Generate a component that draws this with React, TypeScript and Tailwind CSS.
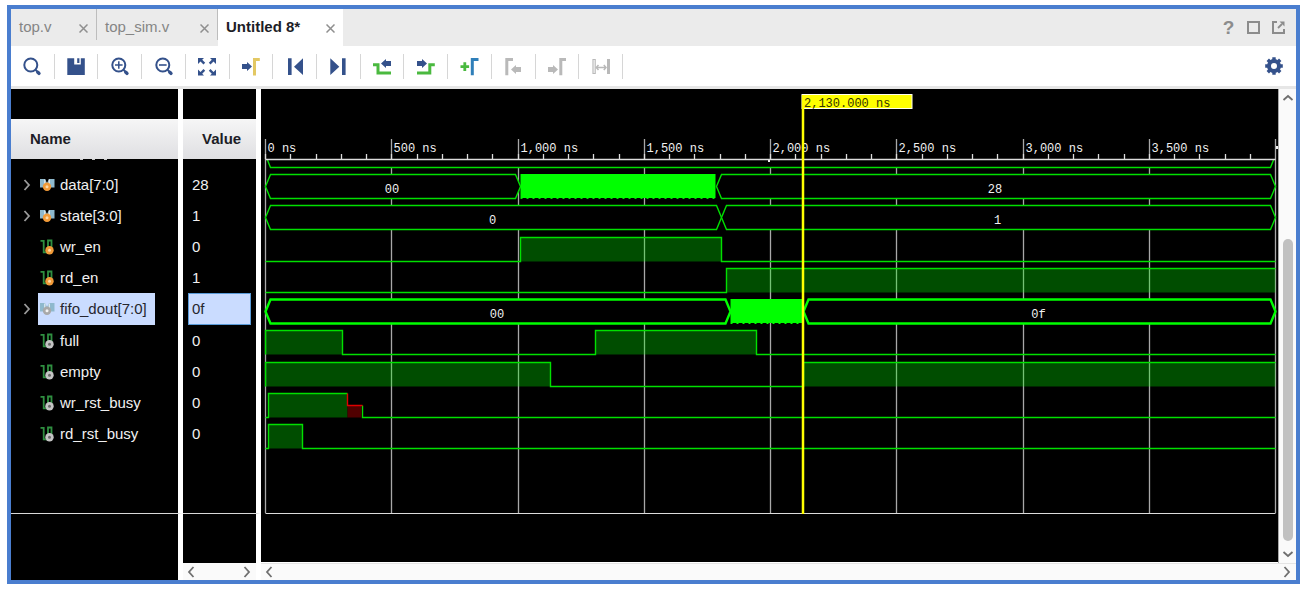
import React from 'react';

type Kind = 'bus' | 'bit';

// [start ns, end ns, text]; a null text is a burst of fast changes
type Segment = [number, number, string | null];

interface Signal {
  name: string;
  value: string;
  kind: Kind;
  internal?: boolean;
  selected?: boolean;
  segments?: Segment[];
  highs?: [number, number][];
  unknown?: [number, number];
}

const END = 4000;

const signals: Signal[] = [
  { name: 'data[7:0]', value: '28', kind: 'bus', internal: true, segments: [[0, 1008, '00'], [1008, 1788, null], [1788, END, '28']] },
  { name: 'state[3:0]', value: '1', kind: 'bus', internal: true, segments: [[0, 1806, '0'], [1806, END, '1']] },
  { name: 'wr_en', value: '0', kind: 'bit', internal: true, highs: [[1008, 1806]] },
  { name: 'rd_en', value: '1', kind: 'bit', internal: true, highs: [[1826, END]] },
  { name: 'fifo_dout[7:0]', value: '0f', kind: 'bus', selected: true, segments: [[0, 1841, '00'], [1841, 2130, null], [2130, END, '0f']] },
  { name: 'full', value: '0', kind: 'bit', highs: [[0, 305], [1308, 1945]] },
  { name: 'empty', value: '0', kind: 'bit', highs: [[0, 1130], [2130, END]] },
  { name: 'wr_rst_busy', value: '0', kind: 'bit', highs: [[10, 326]], unknown: [326, 386] },
  { name: 'rd_rst_busy', value: '0', kind: 'bit', highs: [[10, 148]] },
];

const NAVY = '#34518b';
const GREEN = '#4ab93f';
const GREY = '#b9b9b9';

const arrowRight = (x: number, y: number) => `M${x} ${y + 2}h5v-2l5 4.5-5 4.5v-2h-5z`;
const arrowLeft = (x: number, y: number) => `M${x + 10} ${y + 2}h-5v-2l-5 4.5 5 4.5v-2h5z`;

const Lens = ({ children }: { children?: React.ReactNode }) => (
  <g fill="none" stroke={NAVY}>
    <circle cx="8.8" cy="9" r="6.5" strokeWidth="2" />
    <path d="M13.5 13.8l2.6 2.6" strokeWidth="2" />
    <path d="M15.8 16.2l1.2 1.2" strokeWidth="3.4" strokeLinecap="round" />
    {children}
  </g>
);

const tools: { label: string; disabled?: boolean; icon: React.ReactNode }[] = [
  { label: 'Search', icon: <Lens /> },
  {
    label: 'Save',
    icon: <path fill={NAVY} d="M1.3 2.3h6.9v6.2h6.6V2.3h4V19H1.3zM11.2 2.3h2.2v4.6h-2.2z" />,
  },
  { label: 'Zoom in', icon: <Lens><path d="M5 9h7.6M8.8 5.2v7.6" strokeWidth="1.5" /></Lens> },
  { label: 'Zoom out', icon: <Lens><path d="M5 9h7.6" strokeWidth="1.6" /></Lens> },
  {
    label: 'Zoom fit',
    icon: (
      <path
        fill={NAVY}
        d="M1 2h6L5.2 3.8l3 3-1.7 1.7-3-3L1 8zM19 2h-6l1.8 1.8-3 3 1.7 1.7 3-3L19 8zM1 19.5h6l-1.8-1.8 3-3L6.500 13l-3 3L1 13.5zM19 19.5h-6l1.8-1.8-3-3 1.7-1.7 3 3 2.5-2.5z"
      />
    ),
  },
  {
    label: 'Go to time',
    icon: (
      <>
        <path fill={NAVY} d={arrowRight(1, 6)} />
        <path fill="none" stroke="#e3c863" strokeWidth="3" d="M13.5 19.5v-16h5.3" />
      </>
    ),
  },
  { label: 'Go to start', icon: <path fill={NAVY} d="M3 2.3h3.6V19H3zM18 2.3V19l-9-8.3z" /> },
  { label: 'Go to end', icon: <path fill={NAVY} d="M2.3 2.3V19l9-8.3zM14 2.3h3.6V19H14z" /> },
  {
    label: 'Previous transition',
    icon: (
      <>
        <path fill="none" stroke={GREEN} strokeWidth="3" d="M1 8.8h5V17h13" />
        <path fill={NAVY} d={arrowLeft(9, 3)} />
      </>
    ),
  },
  {
    label: 'Next transition',
    icon: (
      <>
        <path fill="none" stroke={GREEN} strokeWidth="3" d="M1 17h12.8V8.8h5" />
        <path fill={NAVY} d={arrowRight(1, 3)} />
      </>
    ),
  },
  {
    label: 'Add marker',
    icon: (
      <>
        <path fill="none" stroke={GREEN} strokeWidth="2.8" d="M.5 10.700h8.600M4.800 6.300v8.800" />
        <path fill="none" stroke="#2f7fb9" strokeWidth="3" d="M12.300 19.200V3.500h6.200" />
      </>
    ),
  },
  {
    label: 'Previous marker',
    disabled: true,
    icon: (
      <>
        <path fill="none" stroke={GREY} strokeWidth="3" d="M3.800 19.200V3.500H10" />
        <path fill={GREY} d={arrowLeft(8, 9)} />
      </>
    ),
  },
  {
    label: 'Next marker',
    disabled: true,
    icon: (
      <>
        <path fill={GREY} d={arrowRight(1, 9)} />
        <path fill="none" stroke={GREY} strokeWidth="3" d="M13.800 19.200V3.500H19" />
      </>
    ),
  },
  {
    label: 'Swap cursors',
    disabled: true,
    icon: (
      <>
        <path fill="none" stroke={GREY} strokeWidth="1.2" d="M2 3.500h2.200v14H2z" />
        <path fill="none" stroke={GREY} strokeWidth="1.5" d="M5 11.500h10M7.500 9L5.300 11.500l2.200 2.500M12.800 9l2.200 2.500-2.200 2.500" />
        <path fill={GREY} d="M16 3h3v15h-3z" />
      </>
    ),
  },
];

const Chevron = ({ dir }: { dir: 'left' | 'right' | 'up' | 'down' }) => {
  const d = {
    left: 'M7.5 1L3 6l4.5 5',
    right: 'M3.5 1L8 6l-4.5 5',
    up: 'M1.5 8L6 4l4.5 4',
    down: 'M1.5 4L6 8l4.5-4',
  }[dir];
  return (
    <svg viewBox="0 0 12 12" className="block h-3 w-3" fill="none" stroke="currentColor" strokeWidth="1.8">
      <path d={d} />
    </svg>
  );
};

const SignalIcon = ({ kind, internal }: { kind: Kind; internal?: boolean }) => (
  <svg viewBox="0 0 16 16" className="h-4 w-4 shrink-0">
    {kind === 'bus' ? (
      <>
        <path fill="#8fb9cd" d="M1 2h5l2 4 2-4h5.500v8.500H1z" />
        <path fill="none" stroke="#dfeaf0" strokeWidth="1.300" d="M5.800 2.500v4.500M10.300 2.500v4.500" />
        <circle cx="8" cy="9.800" r="4.200" fill={internal ? '#f19a38' : '#a9a9a9'} />
        <circle cx="8" cy="9.800" r="1.500" fill={internal ? '#fbd9a8' : '#f4f4f4'} />
      </>
    ) : (
      <>
        <path fill="none" stroke="#2f8f40" strokeWidth="1.800" d="M1.500 1.800h3.200v11.500H9V1.500h3.500v8" />
        <circle cx="10.500" cy="11.300" r="4.200" fill={internal ? '#f19a38' : '#c4c4c4'} />
        <circle cx="10.500" cy="11.300" r="1.500" fill={internal ? '#fbd9a8' : '#6b6b6b'} />
      </>
    )}
  </svg>
);

const Tab = ({ title, width, active }: { title: string; width: string; active?: boolean }) => (
  <div className={`flex h-[37px] ${width} ${active ? 'bg-white font-bold text-[#1d1d26]' : 'text-[#858585]'}`}>
    <div className="flex flex-1 items-center justify-between px-2 pb-[2px]">
      <button type="button" className="whitespace-nowrap">{title}</button>
      <button type="button" aria-label={`Close ${title}`} className="pt-1 text-[#8f8f8f]">
        <svg viewBox="0 0 9 9" className="block h-[9px] w-[9px]" stroke="currentColor" strokeWidth="1.500">
          <path d="M.5.5l8 8M8.500.5l-8 8" />
        </svg>
      </button>
    </div>
    {!active && <div className="h-[31px] w-px bg-[#bdbdbd]" />}
  </div>
);

const Toolbar = () => (
  <div className="flex h-10 items-center justify-between bg-white">
    <div className="flex w-[612px]">
      {tools.map((tool) => (
        <button
          key={tool.label}
          type="button"
          aria-label={tool.label}
          disabled={tool.disabled}
          className="flex h-[25px] flex-1 items-center justify-center border-r border-[#d6d6d6]"
        >
          <svg viewBox="0 0 20 20" className="h-5 w-5 overflow-visible">{tool.icon}</svg>
        </button>
      ))}
    </div>
    <button type="button" aria-label="Settings" className="mr-3">
      <svg viewBox="-10 -10 20 20" className="block h-5 w-5" fill="none" stroke={NAVY}>
        <circle r="5" strokeWidth="4" />
        {[0, 45, 90, 135].map((a) => (
          <path key={a} d="M0-8.800V-6M0 8.800V6" strokeWidth="3.400" transform={`rotate(${a})`} />
        ))}
      </svg>
    </button>
  </div>
);

const SignalTable = () => {
  const cell = 'border-r-[5px] border-white p-0';
  return (
    <table className="w-[250px] shrink-0 table-fixed border-separate border-spacing-0 bg-black text-[15px] leading-5 text-[#f0f0f0]">
      <colgroup>
        <col className="w-[172px]" />
        <col className="w-[78px]" />
      </colgroup>
      <thead>
        <tr className="h-[30px]">
          <td className={cell} />
          <td className={cell} />
        </tr>
        <tr className="h-10 text-left text-[#1d1d26]">
          <th scope="col" className={`${cell} bg-linear-to-b from-[#f6f6f6] to-[#dfdfe2] bg-clip-padding pl-[19px]`}>Name</th>
          <th scope="col" className={`${cell} bg-linear-to-b from-[#f6f6f6] to-[#dfdfe2] bg-clip-padding pl-[19px]`}>Value</th>
        </tr>
      </thead>
      <tbody>
        <tr className="h-[10px]">
          <td className={`${cell} align-top`}>
            {/* tail of the row scrolled under the header */}
            <div className="flex h-px gap-[9px] pl-[69px]">
              <span className="w-[3px] bg-[#c8c8c8]" />
              <span className="w-[3px] bg-[#c8c8c8]" />
              <span className="w-[3px] bg-[#c8c8c8]" />
            </div>
          </td>
          <td className={cell} />
        </tr>
        {signals.map((s) => (
          <tr key={s.name} className={s.selected ? 'h-8' : 'h-[31px]'}>
            <td className={cell}>
              <div className="flex items-center pl-[10px]">
                <div className="w-[17px] text-[#9a9a9a]">
                  {s.kind === 'bus' && (
                    <button type="button" aria-label={`Expand ${s.name}`} className="block">
                      <Chevron dir="right" />
                    </button>
                  )}
                </div>
                <div className={`flex items-center gap-[5px] pr-2 pl-px ${s.selected ? 'h-8 bg-[#cadcff] text-[#26262e]' : ''}`}>
                  <SignalIcon kind={s.kind} internal={s.internal} />
                  <span>{s.name}</span>
                </div>
              </div>
            </td>
            <td className={cell}>
              <div
                className={`ml-[5px] flex w-[63px] items-center border pl-[3px] ${
                  s.selected ? 'h-8 border-[#5a9bd8] bg-[#cadcff] text-[#26262e]' : 'border-transparent'
                }`}
              >
                {s.value}
              </div>
            </td>
          </tr>
        ))}
        <tr className="h-[65px]">
          <td className={`${cell} border-b border-b-[#d8d8d8]`} />
          <td className={`${cell} border-b border-b-[#d8d8d8]`} />
        </tr>
        <tr className="h-[49px]">
          <td className={cell} />
          <td className={cell} />
        </tr>
        <tr className="h-[17px]">
          <td className={cell} />
          <td className={`${cell} bg-[#fafafa]`}>
            <div className="flex justify-between px-[3px] text-[#6f6f6f]">
              <button type="button" aria-label="Scroll values left"><Chevron dir="left" /></button>
              <button type="button" aria-label="Scroll values right"><Chevron dir="right" /></button>
            </div>
          </td>
        </tr>
      </tbody>
    </table>
  );
};

const AMP = 24;
const xOf = (ns: number) => Math.round(4 + ns * 0.2525) + 0.5;
const yOf = (row: number) => Math.round(row * 31.25) + 85.5;

const BusWave = ({ row, segments, bold }: { row: number; segments: Segment[]; bold?: boolean }) => {
  const top = yOf(row);
  const mid = top + AMP / 2;
  const low = top + AMP;
  return (
    <g stroke={bold ? '#00ff00' : '#00e000'} strokeWidth={bold ? 2.4 : 1.4}>
      {segments.map(([from, to, text]) => {
        const a = xOf(from);
        const b = xOf(to);
        if (text === null) {
          return (
            <g key={from}>
              <rect x={a} y={top - 0.5} width={b - a - 1} height={AMP} fill="#00ff00" stroke="none" />
              <path d={`M${a} ${low}H${b - 1}`} strokeWidth="1" strokeDasharray="2 4" />
            </g>
          );
        }
        return (
          <g key={from}>
            <path fill="#000" d={`M${a} ${mid}L${a + 5} ${top}H${b - 5}L${b} ${mid}L${b - 5} ${low}H${a + 5}z`} />
            <text x={(a + b) / 2 - 1} y={mid + 6} textAnchor="middle" fill="#f0f0f0" stroke="none">{text}</text>
          </g>
        );
      })}
    </g>
  );
};

const BitWave = ({ row, highs, unknown }: { row: number; highs: [number, number][]; unknown?: [number, number] }) => {
  const top = yOf(row);
  const low = top + AMP;
  const mid = top + AMP / 2;
  let d = `M${xOf(0)} ${low}`;
  highs.forEach(([from, to]) => {
    d += `H${xOf(from)}V${top}H${xOf(to)}`;
    if (unknown) d += `M${xOf(unknown[1])} ${mid}V${low}`;
    else if (to < END) d += `V${low}`;
  });
  if (highs[highs.length - 1][1] < END) d += `H${xOf(END)}`;
  return (
    <g strokeWidth="1.4">
      {highs.map(([from, to]) => (
        <rect key={from} x={xOf(from)} y={top} width={xOf(to) - xOf(from)} height={AMP} fill="#00ff00" fillOpacity="0.3" />
      ))}
      <path d={d} fill="none" stroke="#00e000" />
      {unknown && (
        <>
          <rect x={xOf(unknown[0])} y={mid} width={xOf(unknown[1]) - xOf(unknown[0]) - 1} height={AMP / 2} fill="#500000" />
          <path d={`M${xOf(unknown[0])} ${top}V${mid}H${xOf(unknown[1])}`} fill="none" stroke="#e00000" />
        </>
      )}
    </g>
  );
};

const WaveView = () => {
  const majors = [0, 500, 1000, 1500, 2000, 2500, 3000, 3500, 4000];
  const minors = Array.from({ length: 40 }, (_, i) => i * 100);
  const cursor = xOf(2130) - 0.5;
  return (
    <svg
      viewBox="0 0 1017 473"
      preserveAspectRatio="xMinYMin meet"
      className="block h-[473px] min-w-0 flex-1 bg-black text-[12px]"
      fontFamily='"Liberation Mono", monospace'
      role="img"
      aria-label="Waveforms"
    >
      {/* grid and ruler */}
      <g stroke="#a8a8a8" strokeWidth="1.3">
        {majors.map((t) => <path key={t} d={`M${xOf(t)} 50V424`} />)}
      </g>
      <path d={`M${xOf(0)} 424.5H${xOf(END)}`} stroke="#dcdcdc" />

      {/* lower edge of the bus scrolled under the ruler */}
      <path
        d={`M${xOf(0) + 2} 71L${xOf(0) + 5} 78.5H${xOf(END) - 5}L${xOf(END) - 2} 71`}
        fill="#000"
        stroke="#00e000"
        strokeWidth="1.4"
      />
      <g stroke="#dcdcdc" strokeWidth="1.3">
        <path d={`M${xOf(0)} 70.5H${xOf(END)}`} />
        {minors.map((t) => <path key={t} d={`M${xOf(t)} 65V70`} />)}
      </g>
      <g fill="#f0f0f0">
        {majors.slice(0, -1).map((t) => (
          <text key={t} x={xOf(t) + 2} y="63">{`${t.toLocaleString('en-US')} ns`}</text>
        ))}
        <rect x="507" y="71" width="2" height="2" />
        <rect x="1015" y="57" width="2" height="3" />
      </g>

      {signals.map((s, row) =>
        s.segments ? (
          <BusWave key={s.name} row={row} segments={s.segments} bold={s.selected} />
        ) : (
          <BitWave key={s.name} row={row} highs={s.highs ?? []} unknown={s.unknown} />
        ),
      )}

      {/* time cursor */}
      <rect x={cursor - 1} y="5.5" width="110" height="14" fill="#ffff00" stroke="#fffff0" />
      <path d={`M${cursor} 6V425`} stroke="#ffff00" strokeWidth="2.5" />
      <text x={cursor + 1} y="18" fill="#333300">2,130.000 ns</text>
    </svg>
  );
};

const App: React.FC = () => {
  return (
    <div className="min-h-screen bg-white pt-[5px] pr-2 pl-[7px] font-['Liberation_Sans',Arial,sans-serif] text-[15px] leading-5">
      <div className="border-4 border-[#4a7ecf]">

        {/* Tabs */}
        <div className="flex h-[37px] items-center justify-between bg-[#ebebeb]">
          <div className="flex">
            <Tab title="top.v" width="w-[86px]" />
            <Tab title="top_sim.v" width="w-[121px]" />
            <Tab title="Untitled 8*" width="w-[125px]" active />
          </div>
          <div className="flex items-center gap-3 pr-[11px] text-[#8c8c8c]">
            <button type="button" aria-label="Help" className="w-[13px] text-center text-[19px] font-bold">?</button>
            <button type="button" aria-label="Maximize">
              <svg viewBox="0 0 13 13" className="block h-[13px] w-[13px]" fill="none" stroke="currentColor" strokeWidth="2">
                <path d="M1 1h11v11H1z" />
              </svg>
            </button>
            <button type="button" aria-label="Float">
              <svg viewBox="0 0 13 13" className="block h-[13px] w-[13px]" fill="none" stroke="currentColor">
                <path d="M5 1H1v11h11V8" strokeWidth="2" />
                <path d="M6 7l4-4" strokeWidth="1.8" />
                <path d="M7.5.5h5v5z" fill="currentColor" stroke="none" />
              </svg>
            </button>
          </div>
        </div>

        <Toolbar />
        <div className="h-[3px] bg-[#e6e6e6]" />

        {/* Signals and waveforms */}
        <div className="flex bg-white">
          <SignalTable />
          <div className="flex min-w-0 flex-1 flex-col">
            <div className="flex flex-1">
              <WaveView />
              <div className="flex w-[18px] shrink-0 flex-col items-center border-l border-[#a8a8a8] bg-[#fafafa] text-[#6f6f6f]">
                <button type="button" aria-label="Scroll up" className="flex h-[18px] items-center"><Chevron dir="up" /></button>
                <div className="mt-[132px] h-[302px] w-[10px] rounded-full bg-[#c1c1c1]" />
                <button type="button" aria-label="Scroll down" className="mt-auto flex h-[18px] items-center"><Chevron dir="down" /></button>
              </div>
            </div>
            <div className="flex h-[17px] items-center justify-between border-t border-[#e4e4e4] bg-[#fafafa] px-[3px] text-[#6f6f6f]">
              <button type="button" aria-label="Scroll waves left"><Chevron dir="left" /></button>
              <button type="button" aria-label="Scroll waves right"><Chevron dir="right" /></button>
            </div>
          </div>
        </div>
      </div>
    </div>
  );
};

export default App;
